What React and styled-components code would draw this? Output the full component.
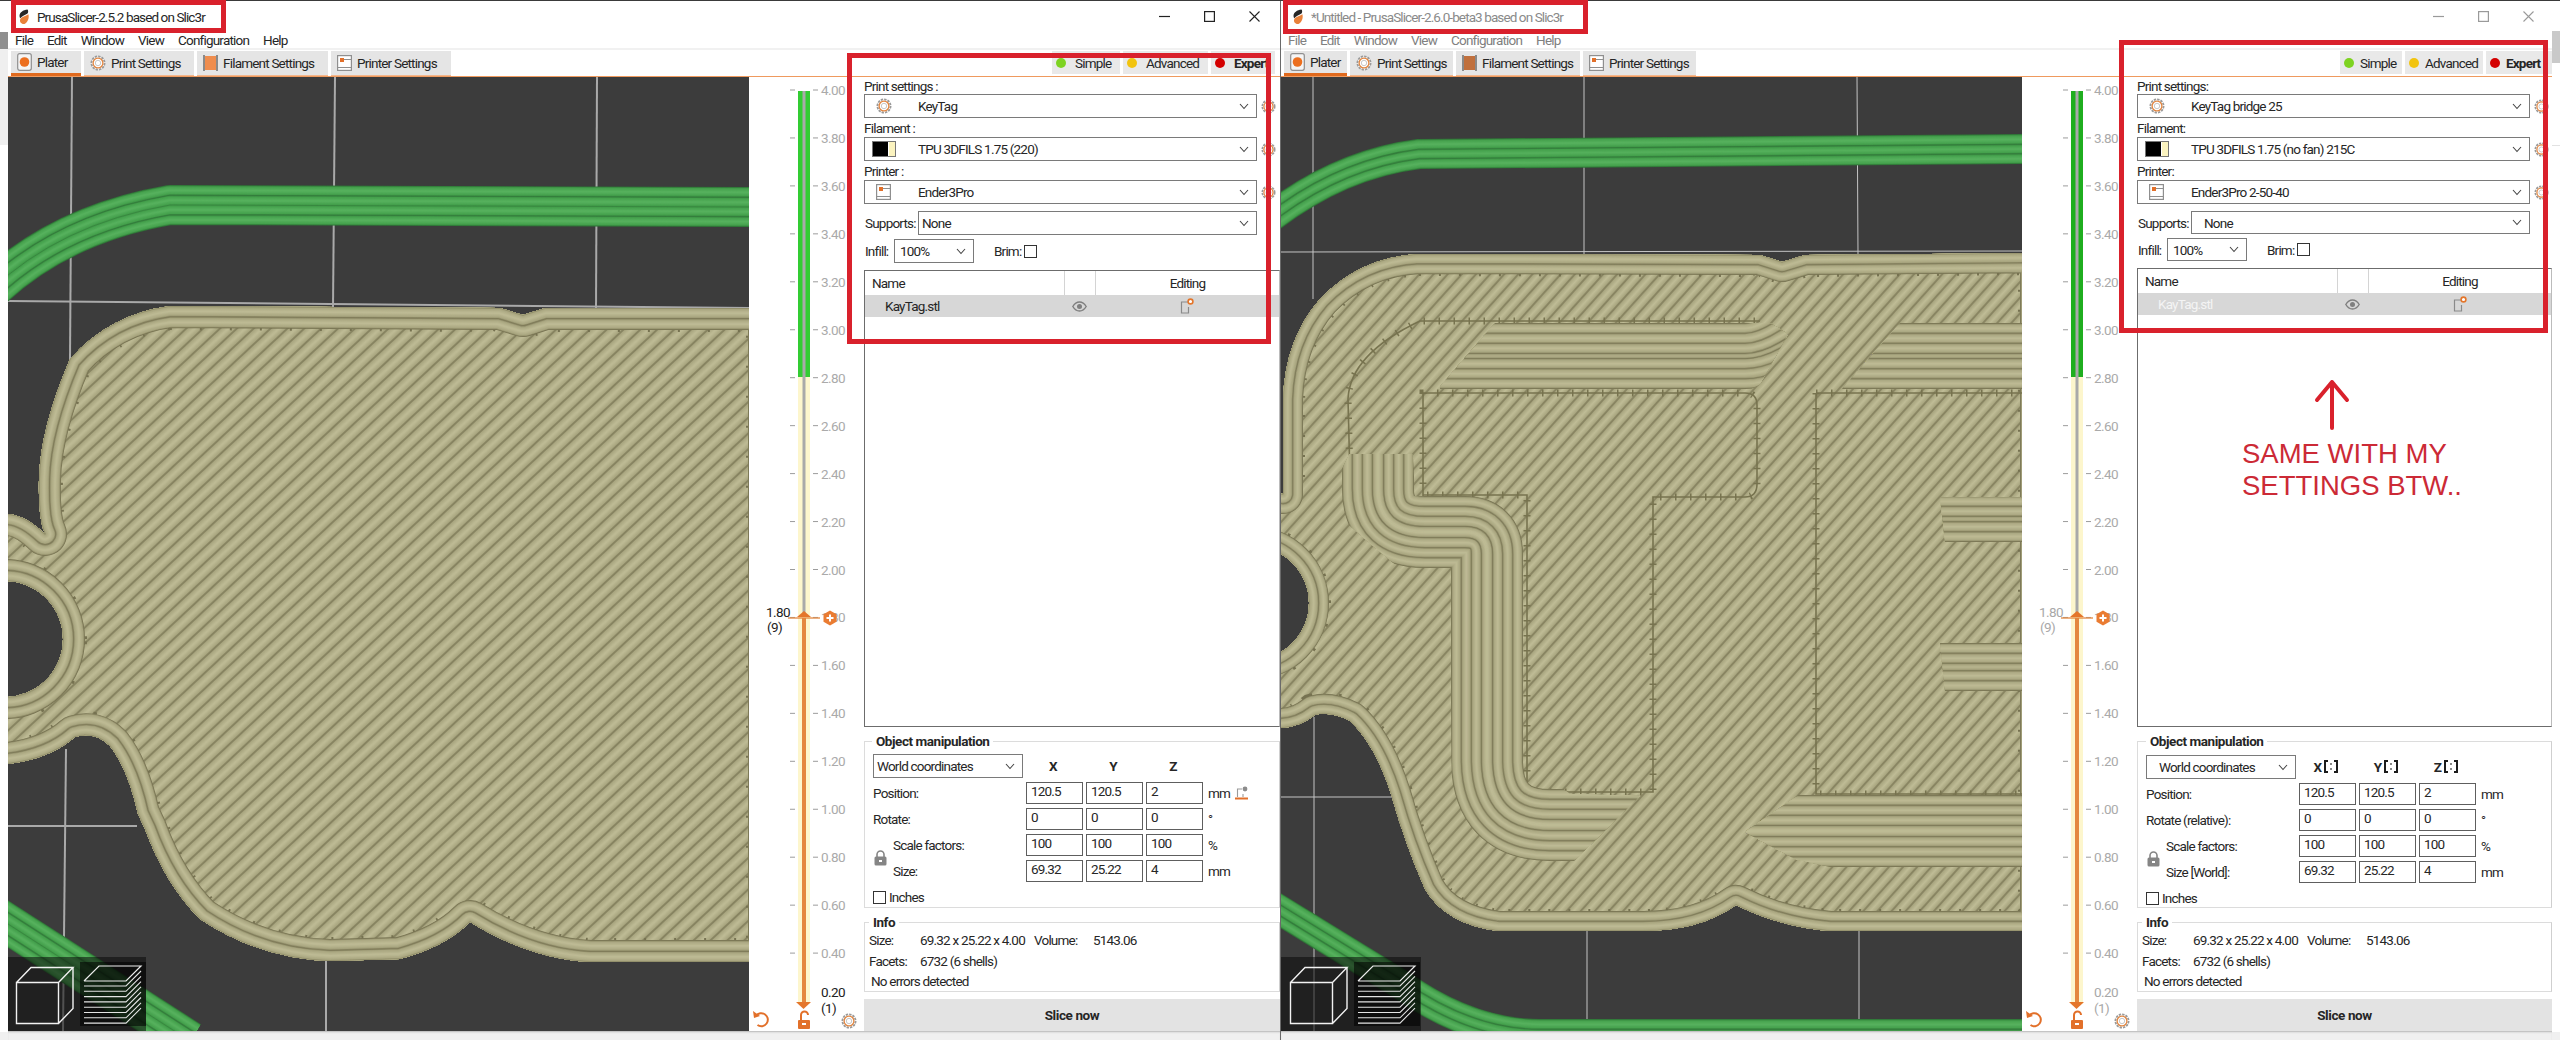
import React from "react";
import styled, { createGlobalStyle } from "styled-components";

const FONT = `Roboto, "Liberation Sans", sans-serif`;
const BOLD = `Roboto, "Liberation Sans", sans-serif`;
const RED = "#d9212c";

const Global = createGlobalStyle`
  html, body { margin: 0; padding: 0; background: #f1f1f1; }
  body { width: 2560px; height: 1040px; overflow: hidden; font-family: ${FONT}; font-size: 13.5px; letter-spacing: -0.8px; color: #262626; }
  * { box-sizing: border-box; }
`;

const Page = styled.div`
  display: flex;
  width: 2560px;
  height: 1040px;
  position: relative;
`;
const Window = styled.section`
  display: flex;
  flex-direction: ${(p) => (p.$gutterRight ? "row-reverse" : "row")};
  width: 1280px;
  height: 1040px;
  position: relative;
  border-top: 1px solid #3a3a3a;
`;
const Gutter = styled.div`
  width: 8px;
  flex: none;
  background: ${(p) =>
    p.$right
      ? "linear-gradient(#fff 0 30px, #c9c9c9 30px 62px, #fff 62px 144px, #e2e2e2 144px 145px, #fff 145px 1031px, #f0f0f0 1031px)"
      : "linear-gradient(#fff 0 31px, #8f8f8f 31px 48px, #efefef 48px 144px, #fff 144px 1031px, #f0f0f0 1031px)"};
`;
const Content = styled.div`
  width: 1272px;
  flex: none;
  display: flex;
  flex-direction: column;
  background: #fff;
  border-left: ${(p) => (p.$bordered ? "1px solid #6a6a6a" : "none")};
`;
const TitleBar = styled.header`
  height: 31px;
  flex: none;
  display: flex;
  align-items: center;
  padding-left: ${(p) => p.$pad}px;
  gap: 7px;
  font-size: 13.5px;
  letter-spacing: -0.9px;
  color: ${(p) => (p.$dim ? "#8a8a8a" : "#262626")};
`;
const TitleText = styled.span`
  flex: 1;
  white-space: nowrap;
`;
const WinControls = styled.div`
  display: flex;
  gap: 34px;
  padding-right: ${(p) => p.$pad}px;
  color: ${(p) => (p.$dim ? "#9a9a9a" : "#222")};
`;
const MenuBar = styled.nav`
  height: 18px;
  flex: none;
  display: flex;
  align-items: center;
  gap: 14px;
  padding-left: 7px;
  color: ${(p) => (p.$dim ? "#808080" : "#262626")};
  border-bottom: 2px solid #f1f1f1;
`;
const TabBar = styled.div`
  height: 27px;
  flex: none;
  display: flex;
  align-items: flex-start;
  padding: 1px 0 0 ${(p) => p.$pad}px;
  gap: 3px;
  border-bottom: 1px solid #ef9a5e;
`;
const Tab = styled.div`
  width: ${(p) => p.$w}px;
  height: 25px;
  display: flex;
  align-items: center;
  gap: 5px;
  padding-left: 6px;
  background: #e5e5e5;
  white-space: nowrap;
  border-bottom: ${(p) => (p.$active ? "3px solid #e06a1e" : "1px solid #f3b88e")};
`;
const ModeGroup = styled.div`
  margin-left: auto;
  display: flex;
  gap: 3px;
  padding-right: ${(p) => p.$pad}px;
`;
const ModeButton = styled.div`
  width: ${(p) => p.$w}px;
  height: 23px;
  display: flex;
  align-items: center;
  gap: ${(p) => p.$gap}px;
  padding-left: 4px;
  overflow: hidden;
  white-space: nowrap;
  background: #e9e9e9;
  font-weight: ${(p) => (p.$active ? 700 : 400)};
`;
const ModeDot = styled.span`
  width: 10px;
  height: 10px;
  border-radius: 50%;
  flex: none;
  background: ${(p) => p.$c};
`;
const Main = styled.main`
  height: 954px;
  flex: none;
  display: flex;
`;
const Viewport = styled.div`
  width: 741px;
  flex: none;
  position: relative;
  background: #3c3c3c;
  overflow: hidden;
`;
const ArtSvg = styled.svg`
  display: block;
  width: 741px;
  height: 954px;
`;
const ViewToggle = styled.div`
  position: absolute;
  left: 0;
  bottom: 0;
  width: ${(p) => p.$w}px;
  height: 74px;
  background: rgba(10, 10, 10, 0.55);
  display: flex;
  align-items: center;
  padding-left: ${(p) => p.$pad}px;
  gap: 2px;
`;
const ToggleButton = styled.div`
  width: 66px;
  height: 64px;
  display: flex;
  align-items: center;
  justify-content: center;
  background: ${(p) => (p.$on ? "rgba(0,0,0,0.55)" : "transparent")};
`;
const SliderCol = styled.div`
  width: 115px;
  flex: none;
  background: #fff;
`;
const SliderSvg = styled.svg`
  display: block;
  width: 115px;
  height: 954px;
  font-family: ${FONT};
  font-size: 13.5px;
  letter-spacing: -0.6px;
`;
const Sidebar = styled.aside`
  width: ${(p) => p.$w}px;
  flex: none;
  display: flex;
  flex-direction: column;
  background: #fff;
`;
const PresetLabel = styled.div`
  height: ${(p) => p.$h}px;
  flex: none;
  display: flex;
  align-items: center;
`;
const PresetRow = styled.div`
  height: 24px;
  flex: none;
  display: flex;
  align-items: center;
  gap: 4px;
`;
const Combo = styled.div`
  width: ${(p) => p.$w}px;
  height: ${(p) => p.$h || 24}px;
  flex: none;
  display: flex;
  align-items: center;
  border: 1px solid #7a7a7a;
  padding-left: ${(p) => p.$pad || 0}px;
  padding-right: 7px;
  background: #fff;
  white-space: nowrap;
`;
const ComboIcon = styled.span`
  width: 53px;
  flex: none;
  display: flex;
  justify-content: center;
  padding-right: 16px;
`;
const ComboText = styled.span`
  flex: 1;
`;
const OptionRow = styled.div`
  flex: none;
  display: flex;
  align-items: center;
  margin-top: ${(p) => p.$mt}px;
`;
const OptionLabel = styled.span`
  width: ${(p) => p.$w}px;
  flex: none;
  padding-left: 1px;
  margin-left: ${(p) => p.$ml || 0}px;
`;
const CheckBox = styled.span`
  width: 13px;
  height: 13px;
  flex: none;
  border: 1px solid #333;
  background: #fff;
`;
const ObjectList = styled.div`
  flex: 1;
  margin-top: 7px;
  margin-bottom: 6px;
  border: 1px solid #6c6c6c;
  border-right: 1px solid #bbb;
  display: flex;
  flex-direction: column;
  background: #fff;
`;
const ListHead = styled.div`
  height: 24px;
  flex: none;
  display: grid;
  grid-template-columns: 199px 31px 1fr;
  align-items: center;
`;
const HeadCell = styled.div`
  height: 100%;
  display: flex;
  align-items: center;
  justify-content: ${(p) => (p.$center ? "center" : "flex-start")};
  padding-left: ${(p) => (p.$center ? 0 : 7)}px;
  border-left: ${(p) => (p.$sep ? "1px solid #d4d4d4" : "none")};
`;
const ListRow = styled.div`
  height: 22px;
  flex: none;
  display: grid;
  grid-template-columns: 199px 31px 1fr;
  align-items: center;
  background: #d7d7d7;
  color: ${(p) => (p.$dim ? "#f4f4f4" : "#262626")};
`;
const RowName = styled.div`
  padding-left: 20px;
`;
const RowIcon = styled.div`
  display: flex;
  justify-content: center;
`;
const Box = styled.fieldset`
  margin: 0;
  flex: none;
  height: ${(p) => p.$h}px;
  margin-top: ${(p) => p.$mt || 0}px;
  padding: 0;
  border: 1px solid #dcdcdc;
  border-right-color: #cfcfcf;
  min-width: 0;
`;
const BoxTitle = styled.legend`
  margin-left: ${(p) => p.$ml}px;
  padding: 0 4px;
  font-weight: 700;
  font-family: ${BOLD};
  font-size: 13.5px;
  letter-spacing: -0.45px;
  line-height: 16px;
`;
const ManipGrid = styled.div`
  display: grid;
  grid-template-columns: 20px 130px 60px 60px 60px auto;
  grid-auto-rows: 22px;
  row-gap: 4px;
  padding: ${(p) => p.$top}px 0 0 8px;
  align-items: center;
  > * { min-width: 0; }
`;
const HeaderCombo = styled.div`
  grid-column: 1 / span 2;
  align-self: start;
  height: 24px;
  margin-top: -2px;
`;
const AxisHead = styled.div`
  display: flex;
  align-items: center;
  justify-content: center;
  gap: 3px;
  font-weight: 700;
  font-family: ${BOLD};
  font-size: 13.5px;
  margin-top: -3px;
`;
const RowLabel = styled.div`
  grid-column: ${(p) => (p.$indent ? "2" : "1 / span 2")};
  white-space: nowrap;
`;
const LockCell = styled.div`
  grid-column: 1;
  grid-row: span 2;
  display: flex;
  padding-left: 1px;
`;
const NumField = styled.div`
  height: 22px;
  margin-left: 3px;
  border: 1px solid #5e5e5e;
  padding: 1px 0 0 4px;
  line-height: 14px;
  background: #fff;
`;
const UnitCell = styled.div`
  display: flex;
  align-items: center;
  gap: 5px;
  padding-left: 5px;
`;
const InchRow = styled.div`
  display: flex;
  align-items: center;
  gap: 3px;
  padding: 7px 0 0 8px;
`;
const InfoRow = styled.div`
  display: grid;
  grid-template-columns: 51px 114px 59px auto;
  height: ${(p) => p.$h}px;
  align-items: center;
  padding-left: 4px;
  white-space: nowrap;
`;
const InfoNote = styled.div`
  height: 20px;
  display: flex;
  align-items: center;
  padding-left: 6px;
`;
const SliceBtn = styled.div`
  flex: none;
  height: 32px;
  margin-top: 7px;
  display: flex;
  align-items: center;
  justify-content: center;
  background: #e3e3e3;
  font-weight: 700;
  font-family: ${BOLD};
  font-size: 13.5px;
  letter-spacing: -0.4px;
`;
const Footer = styled.div`
  flex: 1;
  background: #f0f0f0;
  box-shadow: inset 0 2px 2px -1px #b5b5b5;
`;
const Highlight = styled.div`
  position: absolute;
  left: ${(p) => p.$x}px;
  top: ${(p) => p.$y}px;
  width: ${(p) => p.$w}px;
  height: ${(p) => p.$h}px;
  border: ${(p) => p.$b}px solid ${RED};
  pointer-events: none;
`;
const NoteArrow = styled.svg`
  position: absolute;
  left: 1034px;
  top: 377px;
`;
const NoteText = styled.div`
  position: absolute;
  left: 962px;
  top: 437px;
  font-family: "Liberation Sans", sans-serif;
  font-size: 27.5px;
  line-height: 32px;
  letter-spacing: 0;
  color: #cc2a36;
  white-space: nowrap;
`;

/* ---------- icons ---------- */
const Logo = () => (
  <svg width="12" height="16" viewBox="0 0 12 16">
    <path d="M9.5 0.5C5 1 1.5 3.5 1.5 7c0 1 .3 1.6.8 2.2C4 7 7.5 6 9.5 4.5 10.5 3 10.3 1.5 9.5 .5z" fill="#262626" />
    <path d="M2.4 9.8C3.8 8 7.6 7 10.4 5.2 11.4 9 10 13 6.5 15 3.5 15.5 1 13 2.4 9.8z" fill="#e9813a" />
  </svg>
);
const MinIcon = () => (
  <svg width="11" height="11" viewBox="0 0 11 11"><path d="M0 5.5h11" stroke="currentColor" fill="none" strokeWidth="1.2" /></svg>
);
const MaxIcon = () => (
  <svg width="11" height="11" viewBox="0 0 11 11"><rect x=".6" y=".6" width="9.8" height="9.8" stroke="currentColor" fill="none" strokeWidth="1.2" /></svg>
);
const CloseIcon = () => (
  <svg width="11" height="11" viewBox="0 0 11 11"><path d="M.5.5l10 10M10.5.5l-10 10" stroke="currentColor" fill="none" strokeWidth="1.1" /></svg>
);
const Gear = ({ size = 16 }) => (
  <svg width={size} height={size} viewBox="0 0 16 16">
    <circle cx="8" cy="8" r="6.6" fill="#fff" stroke="#9a9a9a" strokeWidth="1.8" strokeDasharray="2.4 1.05" />
    <circle cx="8" cy="8" r="4.9" fill="none" stroke="#e2853f" strokeWidth="1.3" />
    <circle cx="8" cy="8" r="2.7" fill="#fff" stroke="#c9c9c9" strokeWidth="1" />
  </svg>
);
const PlaterIcon = () => (
  <svg width="15" height="18" viewBox="0 0 15 18">
    <rect x=".7" y=".7" width="13.6" height="16.6" rx="2" fill="#f5f5f5" stroke="#8f8f8f" strokeWidth="1.2" />
    <circle cx="7.5" cy="9" r="4.8" fill="#ec6f1f" />
  </svg>
);
const FilamentIcon = ({ dark }) => (
  <svg width="15" height="18" viewBox="0 0 15 18">
    <rect x="0" y="1" width="2" height="16" fill="#8a8a8a" />
    <rect x="13" y="1" width="2" height="16" fill="#8a8a8a" />
    <rect x="2" y="2" width="11" height="14" fill={dark ? "#c0703d" : "#ef8d4e"} />
  </svg>
);
const PrinterIcon = () => (
  <svg width="15" height="18" viewBox="0 0 15 18">
    <rect x=".6" y="1.6" width="13.8" height="14.8" fill="#fff" stroke="#8f8f8f" strokeWidth="1.2" />
    <path d="M1 13.5h13" stroke="#8f8f8f" strokeWidth="1" />
    <rect x="3" y="4" width="4" height="4" fill="#e2702a" />
    <path d="M7 5.5h7" stroke="#8f8f8f" strokeWidth="1" />
  </svg>
);
const Swatch = () => (
  <svg width="24" height="16" viewBox="0 0 24 16">
    <rect x=".5" y=".5" width="23" height="15" fill="#fff" stroke="#777" />
    <rect x="1" y="1" width="15" height="14" fill="#000" />
    <rect x="17" y="1" width="6" height="14" fill="#fbf3bf" />
  </svg>
);
const Chevron = () => (
  <svg width="10" height="7" viewBox="0 0 10 7"><path d="M1 1l4 4.5L9 1" fill="none" stroke="#444" strokeWidth="1.1" /></svg>
);
const Eye = () => (
  <svg width="15" height="11" viewBox="0 0 15 11">
    <path d="M.8 5.5C3 1.8 5.3 1 7.5 1s4.5.8 6.7 4.5C12 9.2 9.7 10 7.5 10S3 9.2.8 5.5z" fill="none" stroke="#7f7f7f" strokeWidth="1.4" />
    <circle cx="7.5" cy="5.5" r="2.5" fill="#7f7f7f" />
  </svg>
);
const InstanceIcon = () => (
  <svg width="14" height="16" viewBox="0 0 14 16">
    <path d="M8 4H1.5v11h7V9" fill="none" stroke="#8a8a8a" strokeWidth="1.2" />
    <circle cx="10.5" cy="3.5" r="2.4" fill="#fff" stroke="#e4762b" strokeWidth="1.6" />
  </svg>
);
const DropIcon = () => (
  <svg width="14" height="14" viewBox="0 0 14 14">
    <path d="M7 3H2.5v8M2.5 8" fill="none" stroke="#9a9a9a" strokeWidth="1.1" />
    <path d="M8 8v3" stroke="#9a9a9a" strokeWidth="1.1" />
    <circle cx="10" cy="3" r="2.4" fill="#8c8c8c" />
    <rect x="0" y="11.5" width="13" height="2" fill="#e2702a" />
  </svg>
);
const Lock = () => (
  <svg width="13" height="16" viewBox="0 0 13 16">
    <path d="M3 7V4.5a3.5 3.5 0 0 1 7 0V7" fill="none" stroke="#858585" strokeWidth="1.6" />
    <rect x=".5" y="6.5" width="12" height="9" rx="1.5" fill="#858585" />
    <rect x="5" y="10" width="3" height="2" fill="#fff" />
  </svg>
);
const CenterGlyph = () => (
  <svg width="14" height="13" viewBox="0 0 14 13">
    <path d="M4 1H1v11h3M10 1h3v11h-3" fill="none" stroke="#1c1c1c" strokeWidth="2" />
    <path d="M7 3v2M7 8v2" stroke="#555" strokeWidth="1.4" />
  </svg>
);
const CubeIcon = () => (
  <svg width="60" height="62" viewBox="0 0 60 62">
    <path d="M1.5 19.5h42v41h-42zM1.5 19.5L16 4.5h42L43.5 19.5M58 4.5v41L43.5 60.5" fill="none" stroke="#f2f2f2" strokeWidth="1.4" />
  </svg>
);
const LayersIcon = () => (
  <svg width="60" height="60" viewBox="0 0 60 60">
    <path d="M1 17L16 2h42L43 17H1" fill="none" stroke="#eee" strokeWidth="1.2" />
    {[0, 1, 2, 3, 4, 5, 6, 7].map((i) => (
      <path key={i} d={`M1 ${22 + i * 5.3}H43L58 ${7 + i * 5.3}`} fill="none" stroke="#e4e4e4" strokeWidth="1.1" />
    ))}
  </svg>
);

/* ---------- printed-path drawing ---------- */
const mix = (a, b, t) => {
  const pa = a.match(/\w\w/g).map((h) => parseInt(h, 16));
  const pb = b.match(/\w\w/g).map((h) => parseInt(h, 16));
  return `rgb(${pa.map((v, i) => Math.round(v + (pb[i] - v) * t)).join(",")})`;
};
const TAN = ["#767251", "#a8a57f", "#bfbc96"];
const GREEN = ["#2f7437", "#44a04c", "#58b25f"];
const shade = (t, [d, m, l]) => {
  const u = t > 0.5 ? 1 - t : t;
  return u < 0.12 ? mix(d, m, u / 0.12) : mix(m, l, (u - 0.12) / 0.38);
};
/* concentric strands: one path stroked at falling widths */
const Strands = ({ d, halfWidth, period, palette = TAN }) => {
  const steps = [];
  for (let r = halfWidth; r > 0; r -= 0.7) steps.push(r);
  return (
    <g fill="none" strokeLinejoin="round">
      {steps.map((r) => (
        <path key={r} d={d} strokeWidth={r * 2} stroke={shade(((halfWidth - r) / period) % 1, palette)} />
      ))}
    </g>
  );
};
const HatchDefs = ({ id, period, angle }) => (
  <defs>
    <linearGradient id={`${id}g`} x1="0" x2="1" y1="0" y2="0">
      <stop offset="0" stopColor={TAN[0]} />
      <stop offset=".12" stopColor={TAN[1]} />
      <stop offset=".5" stopColor={TAN[2]} />
      <stop offset=".88" stopColor={TAN[1]} />
      <stop offset="1" stopColor={TAN[0]} />
    </linearGradient>
    <pattern id={id} width={period} height={period} patternUnits="userSpaceOnUse" patternTransform={`rotate(${angle})`}>
      <rect width={period} height={period} fill={`url(#${id}g)`} />
    </pattern>
  </defs>
);

const LEFT_SHAPE =
  "M170 307L500 309L523 316L545 309L770 309L770 963L590 963Q530 960 470 923Q445 948 400 960L330 962Q260 960 200 920Q165 885 145 830L138 815Q128 770 110 747Q95 732 75 738Q50 760 8 765L-30 765L-30 515L8 515Q25 516 45 535Q38 520 39 480Q40 430 70 360Q110 315 170 307Z M63 640A58 58 0 1 0 -53 640A58 58 0 1 0 63 640Z";
const RIGHT_SHAPE =
  "M1419 255L1760 256L1782 263L1805 256L2040 254L2040 932L1830 932Q1780 928 1736 906Q1700 932 1643 932L1498 932Q1445 925 1425 890Q1405 845 1391 795Q1375 745 1350 722Q1330 712 1315 716Q1300 728 1281 729L1240 729L1240 489L1283 495L1283 400Q1285 340 1320 300Q1360 258 1419 255Z M1309 604A57 57 0 1 0 1195 604A57 57 0 1 0 1309 604Z";

const GridLines = ({ lines, color, width }) => (
  <g stroke={color} strokeWidth={width} fill="none">
    {lines.map((d) => (
      <path key={d} d={d} />
    ))}
  </g>
);

const LeftArt = () => (
  <ArtSvg viewBox="8 78 741 954">
    <HatchDefs id="hl" period={11.5} angle={47} />
    <defs>
      <clipPath id="cl"><path d={LEFT_SHAPE} clipRule="evenodd" /></clipPath>
    </defs>
    <GridLines
      color="#a9a9a9"
      width={2}
      lines={["M72 78L70 360", "M335 78L333 310", "M597 78L596 312", "M8 302L749 309", "M8 827L137 827", "M66 750L63 1032", "M326 960L326 1032"]}
    />
    <Strands d="M-10 292Q60 225 170 206L760 208" halfWidth={20} period={10} palette={GREEN} />
    <Strands d="M-20 907L190 1042" halfWidth={20} period={10} palette={GREEN} />
    <g clipPath="url(#cl)">
      <path d={LEFT_SHAPE} fill="url(#hl)" fillRule="evenodd" />
      <path d={LEFT_SHAPE} fill="none" stroke="#767251" strokeWidth="48" strokeDasharray="2 28" />
      <Strands d={LEFT_SHAPE} halfWidth={22} period={11} />
    </g>
  </ArtSvg>
);

const Band = ({ id, clip, d, half }) => (
  <>
    <clipPath id={id}><polygon points={clip} /></clipPath>
    <g clipPath={`url(#${id})`}>
      <Strands d={d} halfWidth={half} period={10} />
    </g>
  </>
);

const INNER_EDGES = [
  "M1350 480L1348 400Q1350 355 1420 322L1760 322",
  "M1423 500V394H1745Q1757 394 1757 406V485Q1757 498 1745 498H1653V793H1527V496H1423",
  "M1816 394V795H2030M1816 394H2030",
];

const RightArt = () => (
  <ArtSvg viewBox="1281 78 741 954">
    <HatchDefs id="hr" period={10.5} angle={42} />
    <defs>
      <clipPath id="cr"><path d={RIGHT_SHAPE} clipRule="evenodd" /></clipPath>
    </defs>
    <GridLines
      color="#c4c4c4"
      width={1}
      lines={["M1313 78L1313 300", "M1584 78L1584 256", "M1857 78L1858 256", "M1281 253L2022 252", "M1314 718L1314 1032", "M1281 798L1392 798", "M1587 932L1587 1032", "M1859 932L1859 1032"]}
    />
    <Strands d="M1270 219Q1340 165 1419 155L2030 150" halfWidth={15} period={10} palette={GREEN} />
    <Strands d="M1270 905L1400 985Q1470 1035 1540 1035L2030 1035" halfWidth={15} period={10} palette={GREEN} />
    <g clipPath="url(#cr)">
      <path d={RIGHT_SHAPE} fill="url(#hr)" fillRule="evenodd" />
      <path d={RIGHT_SHAPE} fill="none" stroke="#767251" strokeWidth="44" strokeDasharray="2 18" />
      <Strands d={RIGHT_SHAPE} halfWidth={20} period={10} />
      <g fill="none" stroke="#77734f">
        {INNER_EDGES.map((d) => (
          <g key={d}>
            <path d={d} strokeWidth="7" strokeDasharray="1.5 13.5" />
            <path d={d} strokeWidth="1.6" />
          </g>
        ))}
      </g>
      <Band id="b1" d="M1440 357H1745Q1765 357 1790 340" half={33} clip="1438,390 1495,324 1770,324 1788,335 1760,385 1750,391" />
      <Band id="b2" d="M1378 455V490Q1378 533 1425 533H1465Q1487 533 1487 555V760Q1487 826 1550 826H1640" half={36} clip="1342,470 1362,430 1412,440 1415,497 1523,497 1523,760 1570,795 1640,797 1572,864 1500,864 1452,830 1450,570 1400,570 1342,520" />
      <Band id="b3" d="M1740 832H2040" half={36} clip="1745,833 1800,795 2040,795 2040,868 1830,868 1795,860" />
      <Band id="b4" d="M1840 357H2040" half={33} clip="1842,390 1900,324 2040,324 2040,390" />
      <Band id="b5" d="M1940 520H2040" half={23} clip="1940,498 2040,498 2040,543 1945,543" />
      <Band id="b6" d="M1940 668H2040" half={24} clip="1940,644 2040,644 2040,692 1945,692" />
    </g>
  </ArtSvg>
);

/* ---------- layer slider (a chart of the print's layers) ---------- */
const LAYERS = ["4.00", "3.80", "3.60", "3.40", "3.20", "3.00", "2.80", "2.60", "2.40", "2.20", "2.00", "1.80", "1.60", "1.40", "1.20", "1.00", "0.80", "0.60", "0.40"];
const LayerSlider = ({ green, dimActive }) => {
  const ink = dimActive ? "#a8a8a8" : "#222";
  return (
    <SliderSvg viewBox="0 78 115 954">
      <rect x="49" y="92" width="12" height="913" fill="#fdf6cd" />
      <rect x="49" y="92" width="12" height="286" fill={green} />
      <rect x="53.5" y="92" width="3" height="525" fill="#a9a9a9" />
      <rect x="53" y="619" width="4" height="386" fill="#e4873f" />
      {LAYERS.map((t, i) => {
        const y = 91 + i * 47.95;
        return (
          <g key={i}>
            <path d={`M41 ${y}h5M64 ${y}h5`} stroke="#9c9c9c" />
            <text x="72" y={y + 5} fill="#aaa">{t}</text>
          </g>
        );
      })}
      <path d="M39 619H71" stroke="#e4873f" strokeWidth="1.3" />
      <path d="M48 618L55 612L62 618Z" fill="#e4762b" />
      <text x="17" y="618" fill={ink}>1.80</text>
      <text x="18" y="633" fill={ink}>(9)</text>
      <path d="M81 611.5l6.5 3.7v7.6l-6.5 3.7l-6.5-3.7v-7.6z" fill="#ea7c32" />
      <path d="M81 615.5v7M77.5 619h7" stroke="#fff" strokeWidth="2" />
      <path d="M47 1003H62L54.5 1010Z" fill="#e4762b" />
      <text x="72" y="998" fill={ink}>0.20</text>
      <text x="72" y="1014" fill={ink}>(1)</text>
      <path d="M7 1017a6.5 6.5 0 1 1 1.5 9" fill="none" stroke="#e2702a" strokeWidth="2" />
      <path d="M4 1012l1 7 6-2z" fill="#e2702a" />
      <path d="M52 1021v-5a3.5 3.5 0 0 1 7 0" fill="none" stroke="#e2702a" strokeWidth="2" />
      <rect x="49" y="1021" width="12" height="9" rx="1" fill="#e2702a" />
      <rect x="53" y="1024" width="4" height="2" fill="#fff" />
      <g transform="translate(92 1014)"><Gear /></g>
    </SliderSvg>
  );
};

/* ---------- panels ---------- */
const Preset = ({ label, value, icon, comboW, h }) => (
  <>
    <PresetLabel $h={h}>{label}</PresetLabel>
    <PresetRow>
      <Combo $w={comboW}>
        <ComboIcon>{icon}</ComboIcon>
        <ComboText>{value}</ComboText>
        <Chevron />
      </Combo>
      <Gear size={15} />
    </PresetRow>
  </>
);

const Manipulation = ({ cfg }) => (
  <Box $h={175}>
    <BoxTitle $ml={cfg.legendX}>Object manipulation</BoxTitle>
    <ManipGrid $top={cfg.gridTop}>
      <HeaderCombo>
        <Combo $w={150} $pad={cfg.comboPad}>
          <ComboText>World coordinates</ComboText>
          <Chevron />
        </Combo>
      </HeaderCombo>
      {["X", "Y", "Z"].map((a) => (
        <AxisHead key={a}>{a}{cfg.axisIcons && <CenterGlyph />}</AxisHead>
      ))}
      <span />
      <RowLabel>Position:</RowLabel>
      {["120.5", "120.5", "2"].map((v, i) => <NumField key={i}>{v}</NumField>)}
      <UnitCell>mm{cfg.dropIcon && <DropIcon />}</UnitCell>
      <RowLabel>{cfg.rotate}</RowLabel>
      {["0", "0", "0"].map((v, i) => <NumField key={i}>{v}</NumField>)}
      <UnitCell>°</UnitCell>
      <LockCell><Lock /></LockCell>
      <RowLabel $indent>Scale factors:</RowLabel>
      {["100", "100", "100"].map((v, i) => <NumField key={i}>{v}</NumField>)}
      <UnitCell>%</UnitCell>
      <RowLabel $indent>{cfg.size}</RowLabel>
      {["69.32", "25.22", "4"].map((v, i) => <NumField key={i}>{v}</NumField>)}
      <UnitCell>mm</UnitCell>
    </ManipGrid>
    <InchRow><CheckBox />Inches</InchRow>
  </Box>
);

const Info = ({ cfg }) => (
  <Box $h={78} $mt={6}>
    <BoxTitle $ml={cfg.infoX}>Info</BoxTitle>
    <InfoRow $h={20}>
      <span>Size:</span><span>69.32 x 25.22 x 4.00</span><span>Volume:</span><span>5143.06</span>
    </InfoRow>
    <InfoRow $h={21}>
      <span>Facets:</span><span>6732 (6 shells)</span>
    </InfoRow>
    <InfoNote>No errors detected</InfoNote>
  </Box>
);

const MODE_COLORS = { Simple: "#7ed321", Advanced: "#f2c40f", Expert: "#d40000" };

const SlicerWindow = ({ cfg }) => (
  <Window $gutterRight={cfg.gutterRight}>
    <Gutter $right={cfg.gutterRight} />
    <Content $bordered={cfg.gutterRight}>
      <TitleBar $pad={cfg.titlePad} $dim={cfg.dim}>
        <Logo />
        <TitleText>{cfg.title}</TitleText>
        <WinControls $pad={cfg.ctlPad} $dim={cfg.dim}>
          <MinIcon /><MaxIcon /><CloseIcon />
        </WinControls>
      </TitleBar>
      <MenuBar $dim={cfg.dim}>
        {["File", "Edit", "Window", "View", "Configuration", "Help"].map((m) => <span key={m}>{m}</span>)}
      </MenuBar>
      <TabBar $pad={3}>
        <Tab $w={cfg.tabs[0]} $active><PlaterIcon />Plater</Tab>
        <Tab $w={cfg.tabs[1]}><Gear />Print Settings</Tab>
        <Tab $w={cfg.tabs[2]}><FilamentIcon dark={cfg.dim} />Filament Settings</Tab>
        <Tab $w={cfg.tabs[3]}><PrinterIcon />Printer Settings</Tab>
        <ModeGroup $pad={cfg.modePad}>
          {cfg.modes.map(([m, w]) => (
            <ModeButton key={m} $w={w} $gap={cfg.modeGap} $active={m === "Expert"}>
              <ModeDot $c={MODE_COLORS[m]} />{m}
            </ModeButton>
          ))}
        </ModeGroup>
      </TabBar>
      <Main>
        <Viewport>
          {cfg.art}
          <ViewToggle $w={cfg.toggleW} $pad={cfg.togglePad}>
            <ToggleButton><CubeIcon /></ToggleButton>
            <ToggleButton $on><LayersIcon /></ToggleButton>
          </ViewToggle>
        </Viewport>
        <SliderCol>
          <LayerSlider green={cfg.green} dimActive={cfg.dim} />
        </SliderCol>
        <Sidebar $w={cfg.sideW}>
          <Preset h={17} label={cfg.labels[0]} value={cfg.presets[0]} icon={<Gear />} comboW={393} />
          <Preset h={19} label={cfg.labels[1]} value={cfg.presets[1]} icon={<Swatch />} comboW={393} />
          <Preset h={19} label={cfg.labels[2]} value={cfg.presets[2]} icon={<PrinterIcon />} comboW={393} />
          <OptionRow $mt={7}>
            <OptionLabel $w={54}>Supports:</OptionLabel>
            <Combo $w={339} $h={cfg.rowH} $pad={cfg.comboPad}>
              <ComboText>None</ComboText>
              <Chevron />
            </Combo>
          </OptionRow>
          <OptionRow $mt={4}>
            <OptionLabel $w={30}>Infill:</OptionLabel>
            <Combo $w={80} $h={cfg.rowH} $pad={5}>
              <ComboText>100%</ComboText>
              <Chevron />
            </Combo>
            <OptionLabel $w={31} $ml={19}>Brim:</OptionLabel>
            <CheckBox />
          </OptionRow>
          <ObjectList>
            <ListHead>
              <HeadCell>Name</HeadCell>
              <HeadCell $sep />
              <HeadCell $sep $center>Editing</HeadCell>
            </ListHead>
            <ListRow $dim={cfg.dim}>
              <RowName>KayTag.stl</RowName>
              <RowIcon><Eye /></RowIcon>
              <RowIcon><InstanceIcon /></RowIcon>
            </ListRow>
          </ObjectList>
          <Manipulation cfg={cfg} />
          <Info cfg={cfg} />
          <SliceBtn>Slice now</SliceBtn>
        </Sidebar>
      </Main>
      <Footer />
    </Content>
    {cfg.notes}
  </Window>
);

const LEFT = {
  gutterRight: false,
  title: "PrusaSlicer-2.5.2 based on Slic3r",
  titlePad: 10,
  ctlPad: 20,
  tabs: [70, 110, 131, 120],
  modes: [["Simple", 68], ["Advanced", 85], ["Expert", 64]],
  modePad: 5,
  modeGap: 9,
  toggleW: 138,
  togglePad: 4,
  green: "#33cc33",
  sideW: 416,
  labels: ["Print settings :", "Filament :", "Printer :"],
  presets: ["KeyTag", "TPU 3DFILS 1.75 (220)", "Ender3Pro"],
  rowH: 24,
  comboPad: 3,
  legendX: 7,
  infoX: 4,
  gridTop: 7,
  rotate: "Rotate:",
  size: "Size:",
  dropIcon: true,
  art: <LeftArt />,
  notes: (
    <>
      <Highlight $x={11} $y={-1} $w={215} $h={33} $b={5} />
      <Highlight $x={847} $y={52} $w={424} $h={291} $b={5} />
    </>
  ),
};
const RIGHT = {
  gutterRight: true,
  dim: true,
  title: "*Untitled - PrusaSlicer-2.6.0-beta3 based on Slic3r",
  titlePad: 11,
  ctlPad: 18,
  tabs: [63, 103, 124, 113],
  modes: [["Simple", 62], ["Advanced", 78], ["Expert", 66]],
  modePad: 0,
  modeGap: 6,
  toggleW: 140,
  togglePad: 5,
  green: "#1fae1f",
  sideW: 415,
  labels: ["Print settings:", "Filament:", "Printer:"],
  presets: ["KeyTag bridge 25", "TPU 3DFILS 1.75 (no fan) 215C", "Ender3Pro 2-50-40"],
  rowH: 23,
  comboPad: 12,
  legendX: 8,
  infoX: 4,
  gridTop: 8,
  rotate: "Rotate (relative):",
  size: "Size [World]:",
  axisIcons: true,
  art: <RightArt />,
  notes: (
    <>
      <Highlight $x={3} $y={-1} $w={305} $h={34} $b={5} />
      <Highlight $x={839} $y={39} $w={429} $h={293} $b={5} />
      <NoteArrow width="36" height="52" viewBox="0 0 36 52">
        <path d="M18 50V4M3 22L18 4l15 18" fill="none" stroke={RED} strokeWidth="4" strokeLinecap="round" strokeLinejoin="round" />
      </NoteArrow>
      <NoteText>SAME WITH MY<br />SETTINGS BTW..</NoteText>
    </>
  ),
};

export default function App() {
  return (
    <Page>
      <Global />
      <SlicerWindow cfg={LEFT} />
      <SlicerWindow cfg={RIGHT} />
    </Page>
  );
}
